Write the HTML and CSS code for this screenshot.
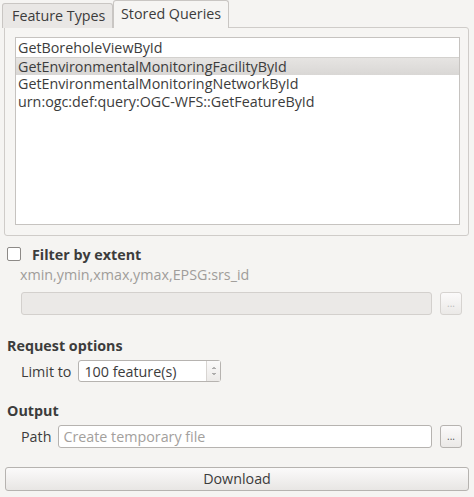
FILE: index.html
```html
<!DOCTYPE html>
<html lang="en">
<head>
    <meta charset="UTF-8">
    <title>WFS Download</title>
    <link rel="stylesheet" href="styles.css">
</head>
<body>

    <div class="tabs">
        <div class="tab">Feature Types</div>
        <div class="tab tab_active">Stored Queries</div>
    </div>

    <div class="pane">
        <div class="list">
            <div class="row">GetBoreholeViewById</div>
            <div class="row row_selected">GetEnvironmentalMonitoringFacilityById</div>
            <div class="row">GetEnvironmentalMonitoringNetworkById</div>
            <div class="row">urn:ogc:def:query:OGC-WFS::GetFeatureById</div>
        </div>
    </div>

    <div class="check_line">
        <span class="checkbox"></span>
        <span class="bold">Filter by extent</span>
    </div>
    <div class="hint">xmin,ymin,xmax,ymax,EPSG:srs_id</div>
    <div class="field_line extent_line">
        <div class="input input_disabled"></div>
        <div class="dots dots_disabled">...</div>
    </div>

    <div class="section bold">Request options</div>
    <div class="field_line limit_line">
        <span class="label">Limit to</span>
        <div class="spin">
            <span>100 feature(s)</span>
            <span class="arrows">
                <svg width="6" height="14" viewBox="0 0 6 14">
                    <path d="M1.5 5 L3 3.5 L4.5 5" fill="none" stroke="#666" stroke-width="1"/>
                    <path d="M1.5 9 L3 10.5 L4.5 9" fill="none" stroke="#666" stroke-width="1"/>
                </svg>
            </span>
        </div>
    </div>

    <div class="section bold output_title">Output</div>
    <div class="field_line path_line">
        <span class="label">Path</span>
        <div class="input placeholder">Create temporary file</div>
        <div class="dots">...</div>
    </div>

    <div class="download">Download</div>

</body>
</html>
```

FILE: styles.css
```css
body{
    margin: 0;
    width: 474px;
    height: 497px;
    background-color: #f5f4f2;
    color: #3c3c3c;
    font-family: "Open Sans", sans-serif;
    font-size: 14.3px;
    overflow: hidden;
}

.tabs{
    display: flex;
    align-items: flex-end;
    height: 28px;
    padding-left: 2px;
}

.tab{
    height: 25px;
    line-height: 24px;
    padding: 0 0 0 9px;
    background-color: #e9e7e5;
    border: 1px solid #c9c6c3;
    border-bottom: none;
    border-radius: 3px 3px 0 0;
    box-sizing: border-box;
    width: 111px;
    white-space: nowrap;
}

.tab_active{
    height: 28px;
    line-height: 25px;
    background-color: #f6f5f3;
    width: 116px;
    padding-left: 7px;
}

.pane{
    margin: -1px 5px 0 4px;
    height: 209px;
    border: 1px solid #cfccc9;
    border-radius: 0 3px 3px 3px;
    box-sizing: border-box;
    padding: 9px 8px 10px 10px;
    background-color: #f6f5f3;
}

.list{
    height: 188px;
    background-color: white;
    border: 1px solid #c6c3c0;
    padding-top: 1px;
    box-sizing: border-box;
}

.row{
    height: 18px;
    line-height: 18px;
    padding-left: 2px;
    white-space: nowrap;
}

.row_selected{
    background: linear-gradient(#e6e4e2, #d9d7d5);
    border-top: 1px solid #d3d1ce;
    height: 17px;
}

.bold{
    font-weight: bold;
}

.check_line{
    display: flex;
    align-items: center;
    margin: 10px 0 0 7px;
    height: 16px;
}

.checkbox{
    width: 12px;
    height: 12px;
    border: 1px solid #8d8a87;
    border-radius: 2px;
    background-color: white;
    margin-right: 11px;
}

.hint{
    color: #a09d9a;
    margin: 4px 0 0 20px;
    height: 18px;
    line-height: 18px;
}

.field_line{
    display: flex;
    align-items: center;
}

.extent_line{
    margin: 8px 0 0 21px;
}

.input{
    flex: 1;
    height: 23px;
    line-height: 21px;
    box-sizing: border-box;
    border: 1px solid #b6b3b0;
    border-radius: 3px;
    background-color: white;
    padding-left: 4px;
}

.input_disabled{
    background-color: #ebe9e7;
    border-color: #d3d0cd;
}

.placeholder{
    color: #a3a09d;
}

.dots{
    width: 22px;
    height: 23px;
    margin: 0 12px 0 8px;
    box-sizing: border-box;
    border: 1px solid #b6b3b0;
    border-radius: 3px;
    background: linear-gradient(#fbfafa, #ebe9e7);
    text-align: center;
    line-height: 20px;
    font-size: 10px;
    color: #555;
}

.dots_disabled{
    color: #bbb;
    border-color: #d6d3d0;
}

.section{
    margin: 22px 0 0 7px;
    height: 18px;
    line-height: 18px;
}

.limit_line{
    margin: 5px 0 0 21px;
}

.label{
    margin-right: 7px;
}

.spin{
    width: 143px;
    height: 22px;
    box-sizing: border-box;
    border: 1px solid #b6b3b0;
    border-radius: 3px;
    background-color: white;
    display: flex;
    align-items: center;
    justify-content: space-between;
    padding-left: 5px;
}

.arrows{
    width: 13px;
    height: 20px;
    border-left: 1px solid #d8d5d2;
    display: flex;
    align-items: center;
    justify-content: center;
    background: linear-gradient(#fbfafa, #eceae8);
}

.output_title{
    margin-top: 20px;
}

.path_line{
    margin: 5px 0 0 21px;
}

.download{
    margin: 19px 5px 0 5px;
    height: 24px;
    line-height: 22px;
    box-sizing: border-box;
    border: 1px solid #b6b3b0;
    border-radius: 3px;
    background: linear-gradient(#fbfafa, #e8e6e4);
    text-align: center;
}
```
